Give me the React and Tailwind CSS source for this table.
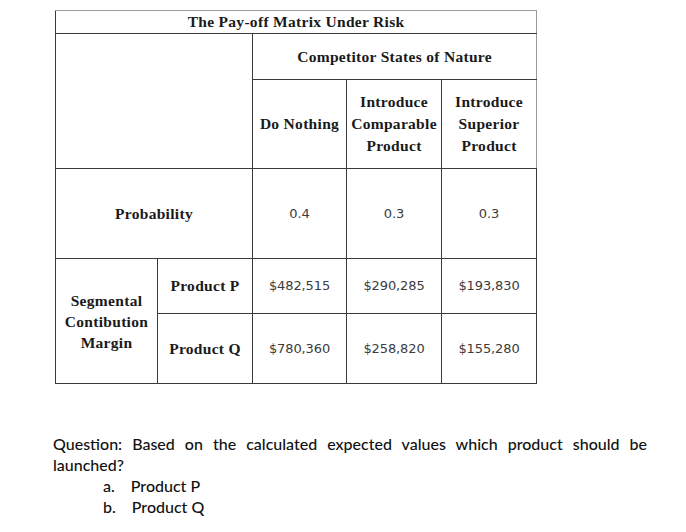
import React from 'react';

const serif = { fontFamily: '"Liberation Serif", "Times New Roman", serif' };

function Cell({ children, className = '', ...rest }) {
    return (
        <td className={`border border-[#3a3a3a] text-center align-middle p-0 ${className}`} {...rest}>
            {children}
        </td>
    );
}

function Value({ children }) {
    return (
        <Cell className="font-['DejaVu_Sans',sans-serif] font-normal text-[13px] tracking-[-0.1px] text-[#3c3c3c]">{children}</Cell>
    );
}

export default function App() {
    return (
        <div className="w-[686px] h-[532px] bg-white overflow-hidden">
            {/* Pay-off matrix */}
            <div className="pl-[55px] pt-[10px]">
                <table
                    className="border-collapse table-fixed w-[481px] text-[#1a1a1a] font-bold text-[15.5px] leading-[22px] tracking-[0.3px]"
                    style={serif}
                >
                    <colgroup>
                        <col className="w-[102px]" />
                        <col className="w-[95px]" />
                        <col className="w-[94px]" />
                        <col className="w-[95px]" />
                        <col className="w-[95px]" />
                    </colgroup>
                    <tbody>
                        <tr className="h-[23px]">
                            <Cell colSpan={5} className="border-t-[#9a9a9a] border-r-[#9a9a9a]">
                                The Pay-off Matrix Under Risk
                            </Cell>
                        </tr>
                        <tr className="h-[46px]">
                            <Cell colSpan={2} rowSpan={2}></Cell>
                            <Cell colSpan={3} className="border-r-[#9a9a9a]">Competitor States of Nature</Cell>
                        </tr>
                        <tr className="h-[89px]">
                            <Cell>Do Nothing</Cell>
                            <Cell>Introduce<br />Comparable<br />Product</Cell>
                            <Cell className="border-r-[#9a9a9a]">Introduce<br />Superior<br />Product</Cell>
                        </tr>
                        <tr className="h-[90px]">
                            <Cell colSpan={2}>Probability</Cell>
                            <Value>0.4</Value>
                            <Value>0.3</Value>
                            <Value>0.3</Value>
                        </tr>
                        <tr className="h-[55px]">
                            <Cell rowSpan={2} className="leading-[21px]">Segmental<br />Contibution<br />Margin</Cell>
                            <Cell>Product P</Cell>
                            <Value>$482,515</Value>
                            <Value>$290,285</Value>
                            <Value>$193,830</Value>
                        </tr>
                        <tr className="h-[70px]">
                            <Cell>Product Q</Cell>
                            <Value>$780,360</Value>
                            <Value>$258,820</Value>
                            <Value>$155,280</Value>
                        </tr>
                    </tbody>
                </table>
            </div>

            {/* Question */}
            <div className="pl-[53px] pt-[49px] w-[647px] font-['Lato',sans-serif] font-medium text-[16px] leading-[21px] text-[#111]">
                <p className="text-justify [text-align-last:justify]">
                    Question: Based on the calculated expected values which product should be
                </p>
                <p>launched?</p>
                <ol className="pl-[50px]">
                    <li className="flex gap-[16px]"><span>a.</span><span>Product P</span></li>
                    <li className="flex gap-[16px]"><span>b.</span><span>Product Q</span></li>
                </ol>
            </div>
        </div>
    );
}
